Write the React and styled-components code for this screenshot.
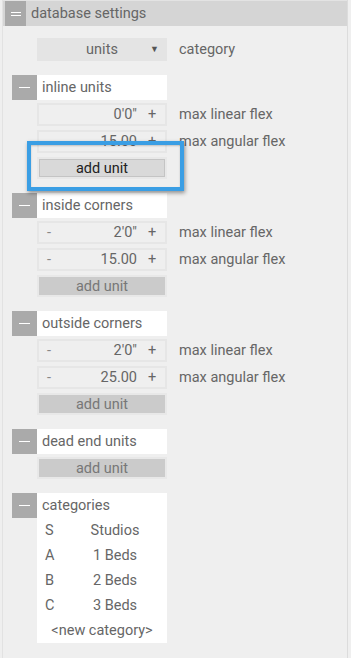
import React from 'react';
import styled, { createGlobalStyle } from 'styled-components';

const SECTIONS = [
  {
    title: 'inline units',
    rows: [
      { value: `0'0"`, label: 'max linear flex', minus: false },
      { value: '15.00', label: 'max angular flex', minus: false },
    ],
    highlight: true,
  },
  {
    title: 'inside corners',
    rows: [
      { value: `2'0"`, label: 'max linear flex', minus: true },
      { value: '15.00', label: 'max angular flex', minus: true },
    ],
  },
  {
    title: 'outside corners',
    rows: [
      { value: `2'0"`, label: 'max linear flex', minus: true },
      { value: '25.00', label: 'max angular flex', minus: true },
    ],
  },
  { title: 'dead end units', rows: [] },
];

const CATEGORIES = [
  ['S', 'Studios'],
  ['A', '1 Beds'],
  ['B', '2 Beds'],
  ['C', '3 Beds'],
];

export default function App() {
  return (
    <>
      <GlobalStyle />
      <Panel>
        <Header>
          <MenuBox>
            <span />
            <span />
          </MenuBox>
          <HeaderTitle>database settings</HeaderTitle>
        </Header>

        <Body>
          <FieldLine>
            <Select>
              <span>units</span>
              <Caret>▼</Caret>
            </Select>
            <Label>category</Label>
          </FieldLine>

          {SECTIONS.map((s) => (
            <Section key={s.title}>
              <SectionHead>
                <MinusButton />
                <TitleBox>{s.title}</TitleBox>
              </SectionHead>
              {s.rows.map((r, i) => (
                <FieldLine key={r.label} $top={i === 0 ? 3 : 4}>
                  <Stepper>
                    <StepSign $muted>{r.minus ? '-' : ''}</StepSign>
                    <StepValue>{r.value}</StepValue>
                    <StepSign>+</StepSign>
                  </Stepper>
                  <Label>{r.label}</Label>
                </FieldLine>
              ))}
              <AddFrame $top={s.rows.length ? 4 : 3} $active={s.highlight}>
                <AddButton $active={s.highlight}>add unit</AddButton>
                {s.highlight && <Highlight />}
              </AddFrame>
            </Section>
          ))}

          <Section>
            <SectionHead>
              <MinusButton />
              <TitleBox>categories</TitleBox>
            </SectionHead>
            <CategoryList>
              {CATEGORIES.map(([k, name]) => (
                <CategoryRow key={k}>
                  <CatKey>{k}</CatKey>
                  <CatName>{name}</CatName>
                </CategoryRow>
              ))}
              <NewCategory>&lt;new category&gt;</NewCategory>
            </CategoryList>
          </Section>
        </Body>
      </Panel>
    </>
  );
}

const GlobalStyle = createGlobalStyle`
  html, body {
    margin: 0;
    padding: 0;
    background: #efefef;
  }
  body {
    font-family: Roboto, "Liberation Sans", sans-serif;
    font-size: 14.5px;
    color: #666;
  }
`;

const Panel = styled.div`
  box-sizing: border-box;
  width: 346px;
  min-height: 658px;
  margin-left: 2px;
  background: #efefef;
  border-left: 1px solid #e2e2e2;
  border-right: 1px solid #dcdcdc;
`;

const Header = styled.div`
  display: flex;
  align-items: center;
  height: 26px;
  background: #d5d5d5;
  border-top: 1px solid #e3e3e3;
  box-sizing: border-box;
`;

const MenuBox = styled.div`
  width: 21px;
  height: 25px;
  margin-left: 2px;
  background: #a9a9a9;
  display: flex;
  flex-direction: column;
  align-items: center;
  justify-content: center;
  gap: 2px;
  span {
    display: block;
    width: 10px;
    height: 1px;
    background: #fff;
  }
`;

const HeaderTitle = styled.div`
  margin-left: 5px;
  font-size: 14.5px;
  color: #666;
`;

const Body = styled.div`
  display: flex;
  flex-direction: column;
  gap: 14px;
  padding: 12px 0 0 9px;
`;

const FieldLine = styled.div`
  display: flex;
  align-items: center;
  gap: 12px;
  padding-left: 25px;
  margin-top: ${(p) => p.$top || 0}px;
`;

const Select = styled.div`
  box-sizing: border-box;
  width: 130px;
  height: 23px;
  background: #e4e4e4;
  display: flex;
  align-items: center;
  justify-content: center;
  position: relative;
  color: #666;
`;

const Caret = styled.span`
  position: absolute;
  right: 8px;
  top: 6px;
  font-size: 9px;
  color: #555;
`;

const Label = styled.span`
  color: #666;
  white-space: nowrap;
`;

const Section = styled.div`
  display: flex;
  flex-direction: column;
`;

const SectionHead = styled.div`
  display: flex;
  height: 25px;
`;

const MinusButton = styled.div`
  width: 25px;
  height: 25px;
  background: #aaaaaa;
  display: flex;
  align-items: center;
  justify-content: center;
  &::before {
    content: '';
    width: 11px;
    height: 1px;
    background: #fff;
  }
`;

const TitleBox = styled.div`
  width: 130px;
  background: #fff;
  display: flex;
  align-items: center;
  padding-left: 5px;
  box-sizing: border-box;
  color: #666;
`;

const Stepper = styled.div`
  box-sizing: border-box;
  width: 130px;
  height: 23px;
  display: flex;
  align-items: center;
  background: #efefef;
  border: 2px solid #e6e6e6;
  color: #666;
`;

const StepSign = styled.span`
  width: 26px;
  text-align: center;
  color: ${(p) => (p.$muted ? '#888' : '#666')};
  &:first-child {
    width: 20px;
  }
`;

const StepValue = styled.span`
  flex: 1;
  text-align: right;
  padding-right: 2px;
`;

const AddFrame = styled.div`
  position: relative;
  box-sizing: border-box;
  width: 130px;
  height: 22px;
  margin: ${(p) => p.$top}px 0 0 25px;
  padding: 2px;
  background: #e8e8e8;
  display: flex;
`;

const AddButton = styled.div`
  flex: 1;
  display: flex;
  align-items: center;
  justify-content: center;
  background: ${(p) => (p.$active ? '#d9d9d9' : '#cbcbcb')};
  color: ${(p) => (p.$active ? '#222' : '#777')};
  border: ${(p) => (p.$active ? '1px solid #c4c4c4' : 'none')};
`;

const Highlight = styled.div`
  position: absolute;
  left: -10px;
  top: -16px;
  width: 157px;
  height: 50px;
  box-sizing: border-box;
  border: 4px solid #3a9ee4;
  box-shadow: 1px 2px 4px rgba(0, 0, 0, 0.4), inset 0 1px 2px rgba(0, 0, 0, 0.2);
  pointer-events: none;
`;

const CategoryList = styled.div`
  margin-left: 25px;
  width: 130px;
  background: #fff;
  display: flex;
  flex-direction: column;
  color: #666;
`;

const CategoryRow = styled.div`
  display: grid;
  grid-template-columns: 38px 80px;
  height: 25px;
  align-items: center;
`;

const CatKey = styled.span`
  padding-left: 8px;
`;

const CatName = styled.span`
  text-align: center;
`;

const NewCategory = styled.div`
  height: 25px;
  display: flex;
  align-items: center;
  justify-content: center;
`;
